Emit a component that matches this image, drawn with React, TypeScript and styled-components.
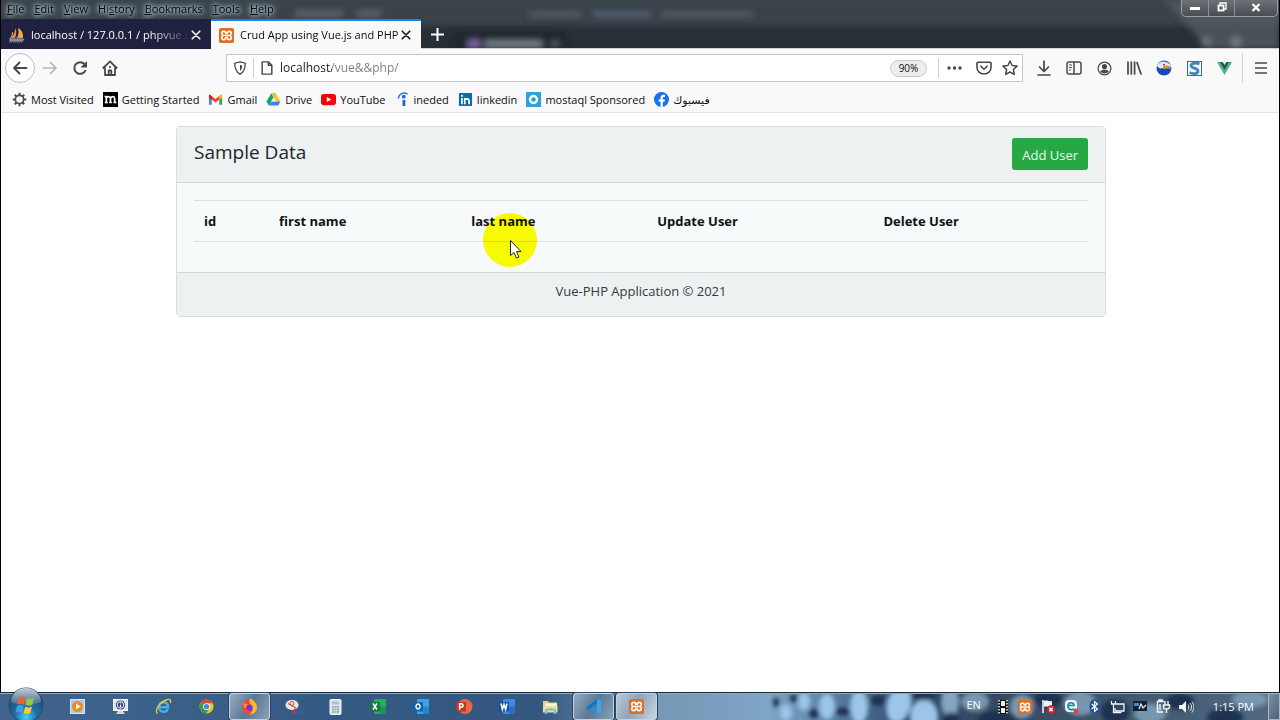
import React from "react";
import styled, { createGlobalStyle, css } from "styled-components";

const GlobalStyle = createGlobalStyle`
  * { box-sizing: border-box; }
  body {
    margin: 0;
    background: #fff;
    font-family: "Open Sans", "Noto Sans", "DejaVu Sans", sans-serif;
    color: #212529;
  }
  button, input { font: inherit; color: inherit; }
  svg { display: block; flex: none; }
`;

const ui = "11px";

const Desktop = styled.div`
  min-height: 100vh;
  display: flex;
  flex-direction: column;
  overflow: hidden;
`;

const BrowserWindow = styled.div`
  flex: 1;
  display: flex;
  flex-direction: column;
  border: solid #000;
  border-width: 0 1px;
  font-size: ${ui};
  line-height: 16px;
`;

const Glass = styled.header`
  position: relative;
  overflow: hidden;
  background: linear-gradient(#3b444b 0, #394249 22px, #293037 30px, #272d33 100%);
`;

const Backdrop = styled.svg`
  position: absolute;
  inset: 0;
  width: 100%;
  height: 100%;
`;

const MenuRow = styled.div`
  position: relative;
  display: flex;
  justify-content: space-between;
  height: 19px;
`;

const MenuBar = styled.nav`
  display: flex;
  gap: 10px;
  height: 17px;
  padding: 0 6px;
`;

const MenuItem = styled.button`
  border: 0;
  padding: 0;
  background: none;
  color: #000;
  line-height: 16px;
  text-shadow: 0 0 3px #a9bac6, 0 0 5px #a9bac6, 0 0 7px #9fb2bf, 0 0 9px #8fa3b1;
`;

const WindowButtons = styled.div`
  display: flex;
  height: 17px;
  margin-right: 1px;
  border: 1px solid #9aa1a6;
  border-top: 0;
  border-radius: 0 0 5px 5px;
  background: linear-gradient(#6b7175, #474d52);
`;

const WindowButton = styled.button<{ $wide?: boolean }>`
  display: grid;
  place-items: center;
  width: ${(p) => (p.$wide ? "43px" : "26px")};
  padding: 0 0 2px;
  border: 0;
  background: none;
  & + & { border-left: 1px solid #8b9297; }
`;

const TabStrip = styled.div`
  position: relative;
  display: flex;
  height: 30px;
  border-bottom: 1px solid #d0d2d3;
`;

const Tab = styled.div<{ $active?: boolean }>`
  display: flex;
  align-items: center;
  width: 210px;
  height: 30px;
  padding: 1px 9px 0 8px;
  color: #fff;
  background: #20203f;
  ${(p) =>
    p.$active &&
    css`
      color: #0c0c0d;
      background: #f9f9fa;
      border-top: 2px solid #1583ec;
      padding-top: 0;
    `}
`;

const TabLabel = styled.span<{ $fade?: boolean }>`
  flex: 1;
  min-width: 0;
  margin-left: 6px;
  white-space: nowrap;
  ${(p) => p.$fade && "mask-image: linear-gradient(90deg, #000 75%, transparent);"}
`;

const PlainButton = styled.button<{ $w?: number }>`
  display: grid;
  place-items: center;
  width: ${(p) => p.$w ?? 30}px;
  height: 30px;
  flex: none;
  padding: 0;
  border: 0;
  background: none;
`;

const TabClose = styled(PlainButton)`
  width: 12px;
  height: 16px;
`;

const NavBar = styled.div`
  display: flex;
  align-items: center;
  height: 38px;
  padding-left: 4px;
  background: #f9f9fa;
  color: #48484b;
`;

const BackButton = styled(PlainButton)`
  border: 1px solid #bdbdbe;
  border-radius: 50%;
  background: #fff;
`;

const AddressBar = styled.div`
  flex: 1;
  min-width: 0;
  display: flex;
  align-items: center;
  height: 28px;
  margin: 0 6px 0 101px;
  padding-right: 1px;
  border: 1px solid #c4c4c5;
  background: #fff;
`;

const Divider = styled.span<{ $tall?: boolean }>`
  width: 1px;
  height: ${(p) => (p.$tall ? "30px" : "20px")};
  margin-left: ${(p) => (p.$tall ? "3px" : "0")};
  background: #d2d2d3;
`;

const AddressInput = styled.input`
  flex: 1;
  min-width: 0;
  border: 0;
  padding: 0;
  outline: 0;
  font-size: 12px;
  color: transparent;
  background: linear-gradient(90deg, #1b1b1d 52px, #7b7b7e 52px);
  background-clip: text;
  -webkit-background-clip: text;
`;

const Zoom = styled.button`
  width: 37px;
  height: 17px;
  margin-right: 11px;
  padding: 0;
  border: 1px solid #cacacb;
  border-radius: 9px;
  background: #ededee;
  color: #0c0c0d;
  font-size: 10px;
  line-height: 15px;
`;

const Bookmarks = styled.nav`
  display: flex;
  gap: 9px;
  height: 26px;
  padding: 0 11px;
  border-bottom: 1px solid #e3e4e6;
  background: #f9f9fa;
`;

const Bookmark = styled.a`
  display: flex;
  align-items: center;
  gap: 4px;
  color: #0c0c0d;
  text-decoration: none;
  white-space: nowrap;
`;

const Page = styled.main`
  flex: 1;
  padding: 13px 14px 13px 16px;
  background: #fff;
  font-size: 13px;
  line-height: 20px;
`;

const Card = styled.section`
  max-width: 930px;
  margin: 0 auto;
  border: 1px solid #d9dcde;
  border-radius: 4px;
  background: #f7fafb;
`;

const CardHeader = styled.div`
  display: flex;
  justify-content: space-between;
  padding: 11px 17px 12px;
  border-bottom: 1px solid #d3d6d8;
  background: #eef1f2;
`;

const CardTitle = styled.h3`
  margin: 0;
  font-size: 19px;
  font-weight: 400;
  line-height: 28px;
`;

const AddButton = styled.button`
  height: 32px;
  padding: 2px 10px 0;
  border: 0;
  border-radius: 3px;
  background: #28a745;
  color: #e9f8ec;
`;

const CardBody = styled.div`
  padding: 17px 17px 30px;
`;

const Table = styled.table`
  width: 100%;
  border-collapse: collapse;
`;

const HeadCell = styled.th<{ $share: string }>`
  position: relative;
  width: ${(p) => p.$share};
  padding: 10px;
  border: solid #dde1e3;
  border-width: 1px 0;
  color: #101214;
  text-align: left;
`;

const Pointer = styled.div`
  position: absolute;
  left: 21px;
  top: 11px;
  pointer-events: none;
  mix-blend-mode: multiply;
`;

const PointerArrow = styled(Pointer)`
  mix-blend-mode: normal;
`;

const CardFooter = styled.footer`
  padding: 8px 17px 15px;
  border-top: 1px solid #d3d6d8;
  background: #eef1f2;
  color: #34393d;
  text-align: center;
`;

const TaskBar = styled.footer`
  position: relative;
  display: flex;
  height: 28px;
  background: #365a82;
  border-top: 1px solid #1b2a38;
  color: #fff;
  font-size: ${ui};
`;

const TaskBackdrop = styled(Backdrop)`
  border-top: 1px solid #8fa9c0;
`;

const StartButton = styled.button`
  position: relative;
  width: 57px;
  padding: 0;
  border: 0;
  background: none;
  & > svg { position: absolute; left: 8px; bottom: -3px; }
`;

const TaskItem = styled.button<{ $open?: "dim" | "lit" }>`
  position: relative;
  display: grid;
  place-items: center;
  width: 41px;
  margin-right: 2px;
  padding: 0;
  border: 1px solid transparent;
  background: none;
  ${(p) =>
    p.$open &&
    css`
      border-color: #c3d1de;
      border-radius: 3px;
      background: ${p.$open === "lit"
        ? "linear-gradient(120deg, #b9c9d8, #8fa5bb 45%, #c6d5e2)"
        : "linear-gradient(120deg, #98abbe, #5b7896 50%, #8ba1b8)"};
      box-shadow: 0 0 0 1px #2a4561;
    `}
`;

const Tray = styled.div`
  position: relative;
  display: flex;
  align-items: center;
  margin-left: auto;
`;

const TrayButton = styled(PlainButton)`
  width: 22px;
  height: 27px;
  & + & { width: 23px; }
`;

const Language = styled.span`
  margin: -4px 11px 0 0;
`;

const Clock = styled.time`
  margin: 0 14px 0 15px;
`;

const ShowDesktop = styled.button`
  width: 12px;
  height: 27px;
  padding: 0;
  border: 1px solid #a9b7c4;
  background: linear-gradient(120deg, #7d90a3, #4d6277);
`;

const Stroke = ({ d, size = 16, w = 2, ...rest }: { d: string; size?: number; w?: number } & React.SVGProps<SVGSVGElement>) => (
  <svg width={size} height={size} viewBox="0 0 16 16" fill="none" stroke="currentColor" strokeWidth={w} strokeLinecap="round" strokeLinejoin="round" {...rest}>
    <path d={d} />
  </svg>
);

const Cross = ({ color }: { color: string }) => (
  <Stroke size={12} w={2.2} color={color} d="M3 3l10 10M13 3L3 13" />
);

const Xampp = ({ size = 15 }: { size?: number }) => (
  <svg width={size} height={size} viewBox="0 0 16 16">
    <rect width="16" height="16" rx="2" fill="#e0701f" />
    <path d="M5.2 3.6c-3 0-3 3.6-.6 4.4-2.4.8-2.4 4.4.6 4.4 2 0 2-1.6 2-2.2h1.6c0 .6 0 2.2 2 2.2 3 0 3-3.6.6-4.4 2.4-.8 2.4-4.4-.6-4.4-2 0-2 1.6-2 2.2H7.2c0-.6 0-2.2-2-2.2z" fill="none" stroke="#fff" strokeWidth="1.7" />
    <path d="M6 8h4" stroke="#fff" strokeWidth="1.6" />
  </svg>
);

const PhpMyAdmin = () => (
  <svg width="16" height="16" viewBox="0 0 16 16">
    <path d="M6.500 1c1 3 1 7-.5 10H2c2.500-3 4-6 4.500-10z" fill="#f0902a" />
    <path d="M9 1c4 2 5.500 6 5 10H8c1.500-3 2-6 1-10z" fill="#f6a843" />
    <path d="M3.500 5C3.500 8 2.500 10 1 12" stroke="#c9b9a4" fill="none" />
    <path d="M1 11.500v3l2-3v3l2-3v3l2-3v3l2-3v3l2-3v3l2-3v3l2-3" fill="none" stroke="#8d8fa3" strokeWidth="1.200" />
  </svg>
);

const Gear = () => (
  <svg width="15" height="15" viewBox="0 0 16 16" fill="none" stroke="#4a4a4d">
    <circle cx="8" cy="8" r="4.400" strokeWidth="1.700" />
    <path d="M8 .8v2.600M8 12.600v2.600M.8 8h2.600M12.600 8h2.600M2.900 2.900l1.900 1.900M11.200 11.200l1.900 1.900M13.100 2.900l-1.900 1.900M4.800 11.200l-1.900 1.900" strokeWidth="2" />
  </svg>
);

const Mdn = () => (
  <svg width="15" height="15" viewBox="0 0 15 15">
    <rect width="15" height="15" fill="#000" />
    <path d="M1.500 4.500h1.800v6M3.300 6.500c1-2.400 4-2.400 4.200 0v4M7.500 6.500c1-2.400 4-2.400 4.200 0v4M1.800 10.500h3M6.200 10.500h2.600M10.400 10.500h3" fill="none" stroke="#fff" strokeWidth="1.700" />
  </svg>
);

const Gmail = () => (
  <svg width="15" height="15" viewBox="0 0 16 16">
    <path d="M1 4v9.500h3V6z" fill="#4285f4" />
    <path d="M15 4v9.500h-3V6z" fill="#34a853" />
    <path d="M1.500 2.500L8 7.400l6.500-4.900.5 3.400-7 5.300-7-5.300z" fill="#ea4335" />
    <path d="M12 4.400l2-1.600c.6 0 1 .5 1 1.200v2l-3 2.200z" fill="#fbbc04" />
    <path d="M1 4c0-.8.5-1.200 1-1.200l2 1.600v3.800L1 6z" fill="#c5221f" />
  </svg>
);

const Drive = () => (
  <svg width="15" height="15" viewBox="0 0 16 16">
    <path d="M5.500 1.500h5L8 5.800 3 14.300.5 10z" fill="#10a55b" />
    <path d="M5.500 1.500h5l5 8.500h-5z" fill="#fcc42b" />
    <path d="M5.600 10h9.900L13 14.300H3z" fill="#3f7ff0" />
    <path d="M8 5.800L10.500 10h-5z" fill="#f9f9fa" />
  </svg>
);

const YouTube = () => (
  <svg width="15" height="15" viewBox="0 0 16 16">
    <rect y="2" width="16" height="12" rx="3" fill="#f00508" />
    <path d="M6.200 5.300v5.400L11 8z" fill="#fff" />
  </svg>
);

const Indeed = () => (
  <svg width="15" height="15" viewBox="0 0 16 16">
    <circle cx="9.400" cy="5" r="2" fill="#1f63d8" />
    <path d="M8 8.400h3V15H8z" fill="#1f63d8" />
    <path d="M3.500 7C4 2 9-.5 13.500 2.200" fill="none" stroke="#2f74e6" strokeWidth="1.500" />
  </svg>
);

const LinkedIn = () => (
  <svg width="15" height="15" viewBox="0 0 16 16">
    <rect x="1" y="1" width="14" height="14" rx="1" fill="#0f6aa8" />
    <path d="M4.200 6.500V13M7.200 13V6.500M7.200 9.500c0-3 4.600-3 4.600 0V13" stroke="#fff" strokeWidth="1.800" fill="none" />
    <circle cx="4.200" cy="4" r="1.200" fill="#fff" />
  </svg>
);

const Mostaql = () => (
  <svg width="15" height="15" viewBox="0 0 15 15">
    <rect width="15" height="15" fill="#2aa3d8" />
    <circle cx="7.500" cy="7.500" r="3.500" fill="none" stroke="#fff" strokeWidth="2.400" />
  </svg>
);

const Facebook = () => (
  <svg width="15" height="15" viewBox="0 0 16 16">
    <circle cx="8" cy="8" r="8" fill="#1673ea" />
    <path d="M7 16v-5.500H5V8.100h2V6.300C7 4 8.300 3 10 3c.7 0 1.300.1 1.700.2v2h-1c-1 0-1.300.5-1.300 1.200v1.700h2.200l-.4 2.400H9.400V16z" fill="#fff" />
  </svg>
);

const Orb = () => (
  <svg width="36" height="36" viewBox="0 0 36 36">
    <defs>
      <radialGradient id="orb" cx=".5" cy=".85" r=".8">
        <stop offset="0" stopColor="#45d3f5" />
        <stop offset=".4" stopColor="#1f6ea8" />
        <stop offset="1" stopColor="#24435f" />
      </radialGradient>
      <linearGradient id="shine" x1="0" y1="0" x2="0" y2="1">
        <stop offset="0" stopColor="#fff" stopOpacity=".75" />
        <stop offset="1" stopColor="#fff" stopOpacity=".1" />
      </linearGradient>
    </defs>
    <circle cx="18" cy="18" r="17" fill="url(#orb)" stroke="#274c6c" />
    <path d="M3 15a15 14 0 0 1 30 0c-9 4-21 4-30 0z" fill="url(#shine)" />
    <path d="M11 10.500c2.500-1.400 4.500-1.300 6.500 0l-1.600 7c-2-1.200-4.200-1.200-6.500 0z" fill="#f0622a" />
    <path d="M19 11c2.300 1.300 4.500 1.300 7-.2l-1.700 7c-2.400 1.300-4.600 1.300-6.800 0z" fill="#96c93d" />
    <path d="M9 19c2.400-1.300 4.500-1.300 6.500 0l-1.600 6.500c-2-1.200-4.100-1.200-6.500.2z" fill="#3fa0e6" />
    <path d="M17.200 19.500c2.200 1.200 4.400 1.200 6.800 0l-1.700 6.600c-2.300 1.300-4.500 1.300-6.700 0z" fill="#fdc92f" />
  </svg>
);

const MediaPlayer = () => (
  <svg width="15" height="15" viewBox="0 0 15 15">
    <rect x=".5" y=".5" width="14" height="14" fill="#a9cde6" stroke="#d4e7f3" />
    <circle cx="7.500" cy="7.500" r="5.500" fill="#f08a1c" />
    <path d="M6 4.500v6l4.500-3z" fill="#fff" />
  </svg>
);

const InfoMonitor = () => (
  <svg width="15" height="16" viewBox="0 0 15 16">
    <rect x=".5" y=".5" width="14" height="11" fill="#dfe6ef" stroke="#f7f9fb" />
    <circle cx="7.500" cy="6" r="4.600" fill="#27328f" />
    <circle cx="7.500" cy="6" r="3.300" fill="none" stroke="#fff" />
    <path d="M7.500 3.500v1M7.500 5.500v3" stroke="#fff" strokeWidth="1.400" />
    <path d="M5 12h5l2 3H3z" fill="#d5d9de" />
  </svg>
);

const InternetExplorer = () => (
  <svg width="17" height="17" viewBox="0 0 17 17">
    <path d="M12.800 11.200c-.8 1.700-2.400 2.600-4.300 2.600-2.900 0-4.700-2-4.700-4.700 0-2.800 2-4.800 4.700-4.800s4.500 2 4.500 5H4.500" fill="none" stroke="#3fb2ee" strokeWidth="2.500" />
    <path d="M2.500 15.500C-1 13.500 4 5 11 2c4-1.600 5.500 0 4.200 3" fill="none" stroke="#f5c33a" strokeWidth="1.400" />
  </svg>
);

const Chrome = ({ size = 15 }: { size?: number }) => (
  <svg width={size} height={size} viewBox="0 0 16 16">
    <circle cx="8" cy="8" r="7.500" fill="#f4c52b" />
    <path d="M8 8L1.500 4.200A7.500 7.500 0 0 1 14.500 4.500H8z" fill="#d8453a" />
    <path d="M1.500 4.200A7.500 7.500 0 0 0 7.500 15.500L11 10 8 8z" fill="#3a9a52" />
    <circle cx="8" cy="8" r="3.600" fill="#fff" />
    <circle cx="8" cy="8" r="2.800" fill="#4a84e8" />
  </svg>
);

const Firefox = () => (
  <svg width="17" height="17" viewBox="0 0 17 17">
    <circle cx="8.500" cy="9" r="7.500" fill="#f4482f" />
    <path d="M9 .5c5 2.500 7.500 6 7 10-.5 3.500-4 6-7.500 6C12 14 12.500 9 9.500 6.500 8.500 4.500 8 2.500 9 .5z" fill="#fcb82e" />
    <path d="M2 4l2 2h3l2 2-2 1.500-4 .5z" fill="#fd8b2d" />
    <circle cx="8.500" cy="9.800" r="3.200" fill="#7a35c8" />
  </svg>
);

const SnippingTool = () => (
  <svg width="16" height="16" viewBox="0 0 16 16">
    <ellipse cx="7" cy="6" rx="6.500" ry="5" fill="#efe6e6" />
    <path d="M3 4.500l8 4.500" stroke="#c45454" strokeWidth="1.200" />
    <circle cx="7" cy="4.500" r="2" fill="none" stroke="#c44" />
    <path d="M10 9.500l-1 4" stroke="#d33" strokeWidth="1.400" />
    <circle cx="9" cy="13.500" r="1.400" fill="none" stroke="#d33" />
    <circle cx="13.500" cy="13" r="1.700" fill="none" stroke="#2f6ac0" />
  </svg>
);

const Calculator = () => (
  <svg width="13" height="16" viewBox="0 0 13 16">
    <rect x="1" y=".5" width="11" height="15" rx="1" fill="#d8e4ee" stroke="#f4f7fa" />
    <rect x="3" y="2.500" width="7" height="3" fill="#a9c3d6" />
    <path d="M3 8h7M3 10.500h7M3 13h7" stroke="#8fa2b3" strokeWidth="1.500" strokeDasharray="2 .5" />
  </svg>
);

const Office = ({ kind }: { kind: "excel" | "outlook" | "powerpoint" | "word" }) => {
  const palette = {
    excel: ["#2fa866", "#107c41"],
    outlook: ["#35a7e6", "#0f64b4"],
    powerpoint: ["#e8674a", "#b93a1d"],
    word: ["#3f8ae0", "#1b4fa3"],
  }[kind];
  const mark = {
    excel: "M3 5.500l4 6M7 5.500l-4 6",
    outlook: "M5 6a2 2.500 0 1 0 .01 0z",
    powerpoint: "M3.600 11.800V5.800h1.600c2.400 0 2.400 3.400 0 3.400H3.600",
    word: "M2 5.500l1.400 6 1.600-5 1.600 5L8 5.500",
  }[kind];
  return (
    <svg width="17" height="17" viewBox="0 0 17 17">
      {kind === "powerpoint" ? <circle cx="9" cy="8.500" r="7.500" fill={palette[0]} /> : <rect x="4" y="1" width="12" height="15" rx="1" fill={palette[0]} />}
      {kind !== "powerpoint" && <path d="M10 8.500h6V16h-6z" fill={palette[1]} opacity=".5" />}
      <rect y="4" width="10" height="9.500" rx="1" fill={palette[1]} />
      <path d={mark} fill="none" stroke="#fff" strokeWidth="1.500" />
    </svg>
  );
};

const Folder = () => (
  <svg width="17" height="16" viewBox="0 0 17 16">
    <path d="M1 2h5l1 1.500h8V13H1z" fill="#e9cf76" />
    <path d="M3 4.500h12V9H3z" fill="#fdf5cf" />
    <path d="M1 7h14.500v6.500H1z" fill="#f4dd8c" />
    <path d="M4 15v-3.500c0-1.500 9-1.500 9 0V15" fill="none" stroke="#7fbbe2" strokeWidth="2.200" />
  </svg>
);

const VsCode = () => (
  <svg width="17" height="17" viewBox="0 0 17 17">
    <path d="M12 .8l4 1.700v12L12 16 1 7.500 3 6l9 6z" fill="#2a8fdc" />
    <path d="M12 .8v4.700L3 12 1 10.300z" fill="#1673b8" />
    <path d="M12 .8l4 1.700v12L12 16z" fill="#37a5f0" />
  </svg>
);

const Backlight = () => (
  <TaskBackdrop viewBox="0 0 1280 27" preserveAspectRatio="xMaxYMid slice" aria-hidden="true">
    <defs>
      <linearGradient id="bar" x1="0" x2="1" y1="0" y2="0">
        <stop offset="0" stopColor="#40648d" />
        <stop offset=".25" stopColor="#355b85" />
        <stop offset=".42" stopColor="#345780" />
        <stop offset=".51" stopColor="#7597b5" />
        <stop offset=".6" stopColor="#7fa5c5" />
        <stop offset=".65" stopColor="#5b80a4" />
        <stop offset=".71" stopColor="#2f4b6e" />
        <stop offset=".78" stopColor="#33495f" />
        <stop offset="1" stopColor="#516a82" />
      </linearGradient>
      <filter id="soft" x="-10%" y="-50%" width="120%" height="200%"><feGaussianBlur stdDeviation="2" /></filter>
    </defs>
    <rect width="1280" height="27" fill="url(#bar)" />
    <g filter="url(#soft)">
      <g fill="#9cc5e8">
        <ellipse cx="786" cy="19" rx="6" ry="8" />
        <ellipse cx="804" cy="8" rx="6" ry="9" />
        <ellipse cx="827" cy="13" rx="8" ry="13" />
        <ellipse cx="859" cy="13" rx="9" ry="17" />
        <ellipse cx="899" cy="11" rx="12" ry="19" transform="rotate(15 899 11)" />
        <ellipse cx="924" cy="23" rx="14" ry="17" />
        <ellipse cx="950" cy="8" rx="9" ry="16" fill="#86a5c2" />
      </g>
      <g fill="#1c3050">
        <ellipse cx="776" cy="9" rx="3" ry="5" />
        <ellipse cx="794" cy="5" rx="4" ry="4" />
        <ellipse cx="814" cy="20" rx="5" ry="5" />
        <ellipse cx="843" cy="18" rx="8" ry="4" />
        <ellipse cx="878" cy="7" rx="8" ry="5" />
        <ellipse cx="923" cy="3" rx="13" ry="4" />
        <ellipse cx="951" cy="25" rx="8" ry="6" />
        <ellipse cx="1000" cy="25" rx="22" ry="8" />
        <ellipse cx="1048" cy="6" rx="14" ry="8" />
        <ellipse cx="1115" cy="18" rx="14" ry="12" />
        <ellipse cx="1180" cy="8" rx="14" ry="8" />
        <ellipse cx="1225" cy="24" rx="18" ry="9" />
      </g>
      <g fill="#7896b0">
        <ellipse cx="975" cy="8" rx="14" ry="10" />
        <ellipse cx="1022" cy="13" rx="12" ry="12" />
        <ellipse cx="1080" cy="10" rx="16" ry="12" />
        <ellipse cx="1150" cy="20" rx="16" ry="10" />
        <ellipse cx="1250" cy="6" rx="18" ry="8" />
      </g>
    </g>
  </TaskBackdrop>
);

const menus: [string, string, string][] = [
  ["", "F", "ile"], ["", "E", "dit"], ["", "V", "iew"], ["Hi", "s", "tory"],
  ["", "B", "ookmarks"], ["", "T", "ools"], ["", "H", "elp"],
];

const bookmarks: [string, React.ReactNode][] = [
  ["Most Visited", <Gear />], ["Getting Started", <Mdn />], ["Gmail", <Gmail />],
  ["Drive", <Drive />], ["YouTube", <YouTube />], ["ineded", <Indeed />],
  ["linkedin", <LinkedIn />], ["mostaql Sponsored", <Mostaql />], ["فيسبوك", <Facebook />],
];

const extensions: [string, React.ReactNode][] = [
  ["Downloads", <Stroke w={1.7} d="M8 1v10M3.500 7L8 11.500 12.500 7M2 15h12" />],
  ["Sidebars", (
    <svg width="16" height="16" viewBox="0 0 16 16" fill="none" stroke="currentColor" strokeWidth="1.500">
      <rect x="1" y="2" width="14" height="12" rx="2" /><path d="M8 2v12" /><path d="M3 5h3M3 7.500h3M3 10h2" strokeWidth="1" />
    </svg>
  )],
  ["Account", (
    <svg width="15" height="15" viewBox="0 0 16 16">
      <circle cx="8" cy="8" r="6.800" fill="none" stroke="currentColor" strokeWidth="1.300" />
      <circle cx="8" cy="6" r="2.700" fill="currentColor" />
      <path d="M3.500 11c1-2.200 8-2.200 9 0-1.500 3-7.500 3-9 0z" fill="currentColor" />
    </svg>
  )],
  ["Library", <Stroke w={1.7} d="M2 2v12M5.300 2v12M8.600 2v12M11 2.500L15 14" />],
  ["Web browser extension", (
    <svg width="16" height="16" viewBox="0 0 16 16">
      <circle cx="8" cy="8" r="7.500" fill="#1548b8" />
      <path d="M1 5.500C3 1 9 0 13 3.500c2 1 2.500 3 2.500 4.500C12 5 9 5 7 8c-2 1-5 .5-6-2.500z" fill="#dfe8f3" />
      <path d="M7 5.800c3-1 6.500-.3 8.300 3.700-2.500-1.500-5-1.200-8.300-.5z" fill="#ef8a30" />
      <circle cx="8" cy="4.600" r=".8" fill="#1a2440" />
    </svg>
  )],
  ["Stylus", (
    <svg width="15" height="15" viewBox="0 0 15 15">
      <rect x=".5" y=".5" width="14" height="14" fill="#f4fafd" stroke="#2c6f9d" />
      <path d="M12.500 3C9 1.500 4 2.200 4 4.800S11 7 11 10s-5 3.200-8.500 1.600" fill="none" stroke="#3f87b6" strokeWidth="2.800" />
    </svg>
  )],
  ["Vue devtools", (
    <svg width="15" height="14" viewBox="0 0 15 14">
      <path d="M0 1h15L7.500 14z" fill="#41b883" /><path d="M3 1h9L7.500 8.800z" fill="#34495e" /><path d="M5.700 1h3.600L7.500 4z" fill="#f9f9fa" />
    </svg>
  )],
];

const tasks: [string, React.ReactNode, ("dim" | "lit")?][] = [
  ["Media Player", <MediaPlayer />], ["System information", <InfoMonitor />],
  ["Internet Explorer", <InternetExplorer />], ["Chrome", <Chrome />],
  ["Firefox", <Firefox />, "dim"], ["Snipping Tool", <SnippingTool />],
  ["Calculator", <Calculator />], ["Excel", <Office kind="excel" />],
  ["Outlook", <Office kind="outlook" />], ["PowerPoint", <Office kind="powerpoint" />],
  ["Word", <Office kind="word" />], ["Explorer", <Folder />],
  ["Visual Studio Code", <VsCode />, "dim"], ["XAMPP", <Xampp />, "lit"],
];

const trayIcons: [string, React.ReactNode][] = [
  ["Recorder", (
    <svg width="10" height="14" viewBox="0 0 10 14">
      <rect width="10" height="14" fill="#111" /><path d="M1 0v14M9 0v14" stroke="#fff" strokeWidth="1.500" strokeDasharray="1.500 1.500" /><rect x="3" y="1" width="4" height="5" fill="#e9eef2" /><rect x="3" y="8" width="4" height="5" fill="#e9eef2" />
    </svg>
  )],
  ["XAMPP control", <Xampp size={14} />],
  ["Action center", (
    <svg width="15" height="15" viewBox="0 0 15 15">
      <path d="M2 1v13" stroke="#fff" strokeWidth="1.500" /><path d="M3 2c3-1.500 4 1 8 0v6c-4 1-5-1.500-8 0z" fill="#eef2f5" /><circle cx="10" cy="10.500" r="4.200" fill="#d32222" /><path d="M8.300 8.800l3.400 3.400M11.700 8.800l-3.400 3.400" stroke="#fff" strokeWidth="1.300" />
    </svg>
  )],
  ["Antivirus", (
    <svg width="15" height="15" viewBox="0 0 15 15">
      <rect x="1" y="1" width="12" height="12" rx="4" fill="#e6f6f6" /><path d="M10 9.500c-2 2.500-6 1-6-2.500 0-4 6-4.500 6-.5H5" fill="none" stroke="#138a93" strokeWidth="1.700" /><circle cx="12" cy="12" r="2.500" fill="#d44" />
    </svg>
  )],
  ["Bluetooth", (
    <svg width="11" height="15" viewBox="0 0 11 15">
      <ellipse cx="5.500" cy="7.500" rx="5" ry="7.300" fill="#1c4f94" /><path d="M2.500 5l6 5-3 2.500v-10l3 2.500-6 5" fill="none" stroke="#fff" strokeWidth="1.200" />
    </svg>
  )],
  ["Network", (
    <svg width="15" height="14" viewBox="0 0 15 14" fill="none" stroke="#f4f7f9" strokeWidth="1.300">
      <path d="M6 4h8v7H5V8" fill="#324860" /><path d="M1.500 1v3h4V1M3.500 4v8.500h8" />
    </svg>
  )],
  ["Display driver", (
    <svg width="14" height="13" viewBox="0 0 14 13">
      <rect y="1" width="14" height="10" fill="#142030" /><path d="M1 3h5v3H1z" fill="#3d8ed0" /><path d="M6 9l2-5 2 4 3-3" stroke="#dce9f4" fill="none" strokeWidth="1.300" />
    </svg>
  )],
  ["Power", (
    <svg width="15" height="15" viewBox="0 0 15 15" fill="none" stroke="#f4f7f9" strokeWidth="1.400">
      <path d="M7 13H1.500V2.500H8M3 2V1h3v1M4 5v6M9 2v4M12 2v4M7.500 6h6v2c0 2.500-6 2.500-6 0zM10.500 10v4" />
    </svg>
  )],
  ["Volume", (
    <svg width="15" height="14" viewBox="0 0 15 14">
      <path d="M0 5h3l4-4v12L3 9H0z" fill="#f1f4f7" /><path d="M9 4.500c1 1.500 1 3.500 0 5M11 3c2 2.500 2 5.500 0 8M13 1.500c2.500 3.500 2.500 7.500 0 11" fill="none" stroke="#dfe7ee" />
    </svg>
  )],
];

export default function App() {
  return (
    <Desktop>
      <GlobalStyle />
      <BrowserWindow>
        <Glass>
          <Backdrop viewBox="0 0 1280 49" preserveAspectRatio="xMaxYMid slice" aria-hidden="true">
            <defs>
              <filter id="haze" x="-20%" y="-80%" width="140%" height="260%"><feGaussianBlur stdDeviation="3" /></filter>
            </defs>
            <g filter="url(#haze)">
              <rect x="296" y="10" width="48" height="7" fill="#5a656c" />
              <rect x="358" y="10" width="24" height="7" fill="#5a656c" />
              <rect x="530" y="12" width="52" height="5" fill="#566068" />
              <rect x="594" y="12" width="58" height="5" fill="#59697a" />
              <rect x="662" y="12" width="92" height="5" fill="#566068" />
              <rect x="456" y="32" width="110" height="18" fill="#1f252c" />
              <rect x="469" y="40" width="12" height="8" fill="#8268a4" />
              <rect x="486" y="41" width="57" height="6" fill="#7c8893" />
              <rect x="552" y="41" width="8" height="5" fill="#5a656e" />
              <path d="M1165 0h115v49h-70z" fill="#596066" opacity=".7" />
              <circle cx="1207" cy="42" r="5" fill="#727a80" />
              <circle cx="1237" cy="42" r="6" fill="#727a80" />
            </g>
          </Backdrop>
          <MenuRow>
            <MenuBar aria-label="Menu">
              {menus.map(([before, key, after]) => (
                <MenuItem key={after}>{before}<u>{key}</u>{after}</MenuItem>
              ))}
            </MenuBar>
            <WindowButtons>
              <WindowButton aria-label="Minimize"><svg width="10" height="8"><rect y="4" width="10" height="3" fill="#fff" /></svg></WindowButton>
              <WindowButton aria-label="Restore"><svg width="10" height="10" fill="none" stroke="#fff"><path d="M3 3V1h6v6H7" strokeWidth="1.300" /><rect x="1.500" y="3.500" width="5" height="5" strokeWidth="1.800" /></svg></WindowButton>
              <WindowButton $wide aria-label="Close window"><svg width="10" height="9" stroke="#fff" strokeWidth="2.200"><path d="M1.500 1l7 7M8.500 1l-7 7" /></svg></WindowButton>
            </WindowButtons>
          </MenuRow>
          <TabStrip role="tablist">
            <Tab role="tab" aria-selected="false">
              <PhpMyAdmin />
              <TabLabel $fade>localhost / 127.0.0.1 / phpvue /</TabLabel>
              <TabClose aria-label="Close tab"><Cross color="#f4f4f6" /></TabClose>
            </Tab>
            <Tab $active role="tab" aria-selected="true">
              <Xampp />
              <TabLabel>Crud App using Vue.js and PHP</TabLabel>
              <TabClose aria-label="Close tab"><Cross color="#19191b" /></TabClose>
            </Tab>
            <PlainButton $w={32} aria-label="New tab">
              <svg width="13" height="13" stroke="#fff" strokeWidth="2"><path d="M6.500 0v13M0 6.500h13" /></svg>
            </PlainButton>
          </TabStrip>
        </Glass>

        <NavBar>
          <BackButton aria-label="Back"><Stroke w={1.9} d="M14.500 8H2M7.500 2.500L2 8l5.500 5.500" /></BackButton>
          <PlainButton aria-label="Forward"><Stroke w={1.7} color="#b5b5b7" d="M1.500 8H14M8.500 2.500L14 8l-5.500 5.500" /></PlainButton>
          <PlainButton aria-label="Reload">
            <svg width="16" height="16" viewBox="0 0 16 16" fill="none" stroke="currentColor" strokeWidth="2">
              <path d="M12.500 4.200A5.800 5.800 0 1 0 13.600 10" /><path d="M15 1v6.500H8.500z" fill="currentColor" stroke="none" />
            </svg>
          </PlainButton>
          <PlainButton aria-label="Home">
            <svg width="16" height="16" viewBox="0 0 16 16" fill="none" stroke="currentColor" strokeWidth="1.800" strokeLinejoin="round">
              <path d="M.8 8.500L8 1.400l7.200 7.100M3 7.500V15h10V7.500" /><path d="M6.700 15v-4.500h2.600V15" /><path d="M8 6v2" />
            </svg>
          </PlainButton>
          <AddressBar>
            <PlainButton $w={26} aria-label="Tracking protection">
              <svg width="14" height="14" viewBox="0 0 16 16" fill="none" stroke="currentColor" strokeWidth="1.500">
                <path d="M8 1l6 1.500c0 6-1.500 10-6 12.500C3.500 12.500 2 8.500 2 2.500z" /><path d="M8 4.500l2.500.5c0 3-.8 5-2.500 6.500z" fill="currentColor" stroke="none" />
              </svg>
            </PlainButton>
            <Divider />
            <PlainButton $w={26} aria-label="Site information">
              <Stroke size={14} w={1.7} d="M2.500 1h7l4 4v10h-11zM9.500 1v4h4" />
            </PlainButton>
            <AddressInput aria-label="Address" defaultValue="localhost/vue&&php/" spellCheck={false} />
            <Zoom>90%</Zoom>
            <Divider />
            <PlainButton aria-label="Page actions">
              <svg width="15" height="4" fill="currentColor"><circle cx="2" cy="2" r="1.700" /><circle cx="7.500" cy="2" r="1.700" /><circle cx="13" cy="2" r="1.700" /></svg>
            </PlainButton>
            <PlainButton aria-label="Save to Pocket">
              <Stroke w={1.6} d="M1.800 2.200h12.400c.5 0 .8.300.8.800v4.500a7 6.500 0 0 1-14 0V3c0-.5.300-.8.800-.8zM4.800 6.200L8 9.300l3.200-3.100" />
            </PlainButton>
            <PlainButton $w={22} aria-label="Bookmark page">
              <Stroke w={1.5} d="M8 1l2.100 4.500 4.900.6-3.600 3.400.9 4.900L8 12l-4.300 2.400.9-4.900L1 6.100l4.900-.6z" />
            </PlainButton>
          </AddressBar>
          {extensions.map(([name, icon]) => (
            <PlainButton key={name} aria-label={name}>{icon}</PlainButton>
          ))}
          <Divider $tall />
          <PlainButton $w={36} aria-label="Open menu">
            <svg width="12" height="12" stroke="currentColor" strokeWidth="1.700"><path d="M0 1h12M0 6h12M0 11h12" /></svg>
          </PlainButton>
        </NavBar>

        <Bookmarks aria-label="Bookmarks">
          {bookmarks.map(([name, icon]) => (
            <Bookmark key={name} href="#">{icon}<span>{name}</span></Bookmark>
          ))}
        </Bookmarks>

        <Page>
          <Card>
            <CardHeader>
              <CardTitle>Sample Data</CardTitle>
              <AddButton>Add User</AddButton>
            </CardHeader>
            <CardBody>
              <Table>
                <thead>
                  <tr>
                    <HeadCell $share="8.4%">id</HeadCell>
                    <HeadCell $share="21.5%">first name</HeadCell>
                    <HeadCell $share="20.8%">
                      last name
                      <Pointer>
                        <svg width="56" height="56"><circle cx="28" cy="28" r="27" fill="#ffff00" /></svg>
                      </Pointer>
                      <PointerArrow>
                        <svg width="56" height="56"><path d="M28.500 28.500v15l3.500-3 2.500 5.500 2.500-1-2.500-5.500h4.500z" fill="#fff" stroke="#26262c" /></svg>
                      </PointerArrow>
                    </HeadCell>
                    <HeadCell $share="25.3%">Update User</HeadCell>
                    <HeadCell $share="24%">Delete User</HeadCell>
                  </tr>
                </thead>
              </Table>
            </CardBody>
            <CardFooter>Vue-PHP Application © 2021</CardFooter>
          </Card>
        </Page>
      </BrowserWindow>

      <TaskBar>
        <Backlight />
        <StartButton aria-label="Start"><Orb /></StartButton>
        {tasks.map(([name, icon, open]) => (
          <TaskItem key={name} $open={open} aria-label={name}>{icon}</TaskItem>
        ))}
        <Tray>
          <Language>EN</Language>
          {trayIcons.map(([name, icon]) => (
            <TrayButton key={name} aria-label={name}>{icon}</TrayButton>
          ))}
          <Clock>1:15 PM</Clock>
          <ShowDesktop aria-label="Show desktop" />
        </Tray>
      </TaskBar>
    </Desktop>
  );
}
